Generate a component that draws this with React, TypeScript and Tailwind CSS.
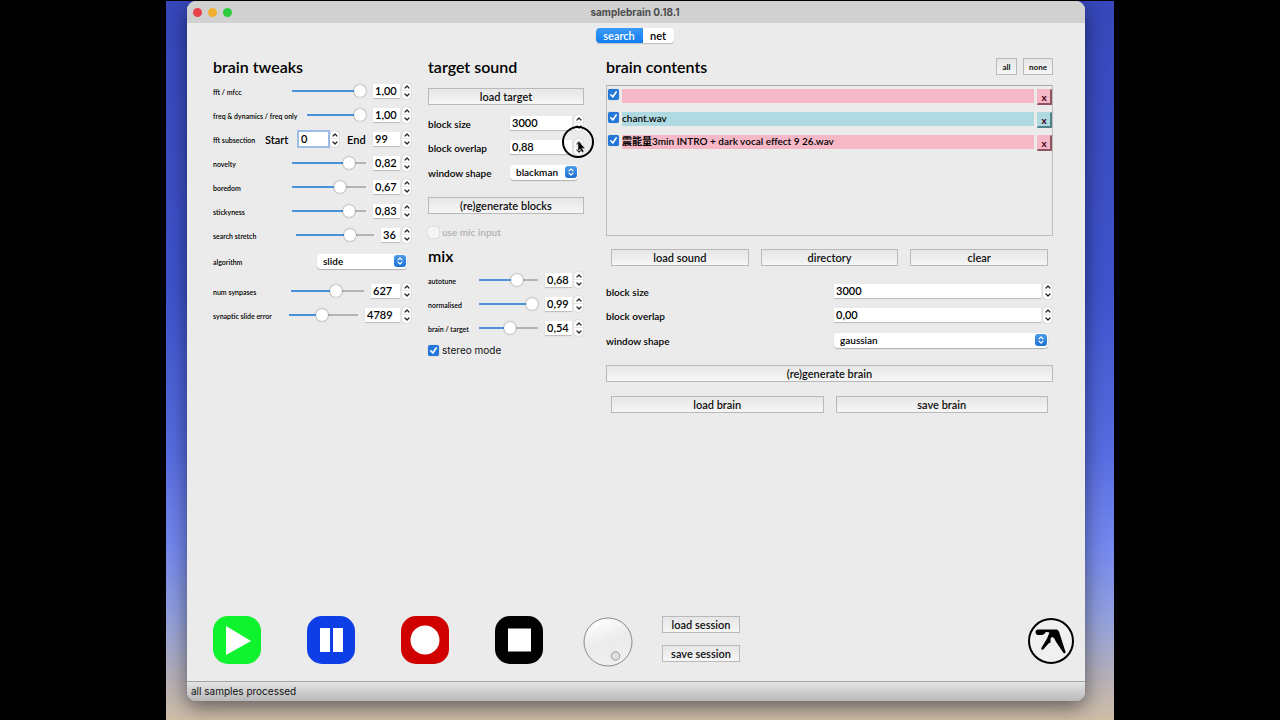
import { useState } from "react";
import type { ReactNode } from "react";

const LABEL = "pt-px text-[10px] leading-4 font-semibold text-black whitespace-nowrap";
const SMALL = "pt-px text-[7px] leading-3 font-semibold text-black whitespace-nowrap";

function Chevron({ up }: { up?: boolean }) {
  return (
    <svg viewBox="0 0 6 4" className="h-1 w-1.5" fill="none" stroke="#222" strokeWidth="1.2" strokeLinecap="round" strokeLinejoin="round">
      <path d={up ? "M1 3L3 1L5 3" : "M1 1L3 3L5 1"} />
    </svg>
  );
}

function Stepper({ name }: { name: string }) {
  return (
    <span className="flex h-4 w-[9px] shrink-0 flex-col overflow-hidden rounded-[4px] bg-white shadow-[0_0_1px_rgba(0,0,0,0.4)]">
      <button type="button" aria-label={`${name} up`} className="flex h-2 items-center justify-center border-b border-[#e4e4e4]">
        <Chevron up />
      </button>
      <button type="button" aria-label={`${name} down`} className="flex h-2 items-center justify-center">
        <Chevron />
      </button>
    </span>
  );
}

type SpinProps = { id: string; name: string; value: string; width: string; focused?: boolean };

function Spin({ id, name, value, width, focused }: SpinProps) {
  const [text, setText] = useState(value);
  const ring = focused ? "ring-2 ring-[#9dbde8]" : "shadow-[0_1px_1px_rgba(0,0,0,0.18)]";
  return (
    <span className={`flex items-center gap-0.5 ${width}`}>
      <input
        id={id}
        aria-label={name}
        value={text}
        onChange={(e) => setText(e.target.value)}
        className={`h-3.5 min-w-0 flex-1 bg-white px-0.5 text-[11px] leading-[14px] font-semibold text-black outline-none ${ring}`}
      />
      <Stepper name={name} />
    </span>
  );
}

type SliderRowProps = { name: string; value: string; amount: number; max?: number; slider: string; field: string };

function SliderRow({ name, value, amount, max = 1, slider, field }: SliderRowProps) {
  const [level, setLevel] = useState(amount);
  const id = name.replace(/\W+/g, "-");
  const share = (level / max) * 100;
  return (
    <div className="flex h-6 items-center gap-[7px]">
      <label htmlFor={id} className={`min-w-0 flex-1 ${SMALL}`}>
        {name}
      </label>
      <input
        type="range"
        id={id}
        min={0}
        max={max}
        step={max / 1000}
        value={level}
        onChange={(e) => setLevel(Number(e.target.value))}
        style={{ backgroundImage: `linear-gradient(to right, #4a92dc ${share}%, #b4b4b4 ${share}%)` }}
        className={`h-3 shrink-0 appearance-none bg-[length:100%_2px] bg-center bg-no-repeat [&::-webkit-slider-thumb]:size-3 [&::-webkit-slider-thumb]:appearance-none [&::-webkit-slider-thumb]:rounded-full [&::-webkit-slider-thumb]:bg-white [&::-webkit-slider-thumb]:shadow-[0_0_2px_rgba(0,0,0,0.5)] ${slider}`}
      />
      <Spin id={`${id}-value`} name={`${name} value`} value={value} width={field} />
    </div>
  );
}

function Picker({ id, value, options, width }: { id: string; value: string; options: string[]; width: string }) {
  return (
    <span className={`relative flex h-[15px] rounded-[4px] bg-white shadow-[0_1px_1px_rgba(0,0,0,0.25)] ${width}`}>
      <select id={id} defaultValue={value} className="w-full appearance-none bg-transparent px-1.5 text-[10px] leading-[15px] font-semibold outline-none">
        {options.map((o) => (
          <option key={o}>{o}</option>
        ))}
      </select>
      <span className="pointer-events-none absolute top-px right-px flex size-3 flex-col items-center justify-center rounded-[3px] bg-linear-to-b from-[#4c9cec] to-[#1a6fd0]">
        <svg viewBox="0 0 12 12" className="size-3" fill="none" stroke="#fff" strokeWidth="1.2" strokeLinecap="round" strokeLinejoin="round">
          <path d="M4 4.8L6 2.8L8 4.8M4 7.2L6 9.2L8 7.2" />
        </svg>
      </span>
    </span>
  );
}

function Push({ children, className = "", size = "text-[11px] font-semibold" }: { children: ReactNode; className?: string; size?: string }) {
  return (
    <button
      type="button"
      className={`flex h-[17px] items-center justify-center border border-[#b9b9b9] bg-linear-to-b from-[#e6e6e6] to-[#f6f6f6] leading-none text-[#111] ${size} ${className}`}
    >
      {children}
    </button>
  );
}

function Tick({ id, name, checked, disabled }: { id: string; name?: string; checked?: boolean; disabled?: boolean }) {
  const [on, setOn] = useState(!!checked);
  return (
    <span className="relative flex size-[11px] shrink-0">
      <input
        type="checkbox"
        id={id}
        aria-label={name}
        checked={on}
        disabled={disabled}
        onChange={() => setOn(!on)}
        className="size-[11px] appearance-none rounded-[2px] bg-[#f4f4f4] shadow-[0_0_1px_rgba(0,0,0,0.4)] checked:bg-[#2478d8]"
      />
      {on && (
        <svg viewBox="0 0 11 11" className="pointer-events-none absolute inset-0 size-[11px]" fill="none" stroke="#fff" strokeWidth="1.6" strokeLinecap="round" strokeLinejoin="round">
          <path d="M2.8 5.8L4.8 8L8.2 3" />
        </svg>
      )}
    </span>
  );
}

function Heading({ children }: { children: ReactNode }) {
  return <h2 className="h-[22px] text-[16px] leading-5 font-semibold whitespace-nowrap">{children}</h2>;
}

function Tweaks() {
  return (
    <section className="w-[198px] shrink-0">
      <Heading>brain tweaks</Heading>
      <SliderRow name="fft / mfcc" value="1,00" amount={1} slider="w-[74px]" field="w-[38px]" />
      <SliderRow name="freq & dynamics / freq only" value="1,00" amount={1} slider="w-[59px]" field="w-[38px]" />
      <div className="flex h-6 items-center">
        <span className={`flex-1 ${SMALL}`}>fft subsection</span>
        <label htmlFor="start" className="w-[34px] pt-px text-[11px] leading-4 font-semibold">Start</label>
        <Spin id="start" name="Start" value="0" width="w-10" focused />
        <label htmlFor="end" className="ml-2 w-[26px] pt-px text-[11px] leading-4 font-semibold">End</label>
        <Spin id="end" name="End" value="99" width="w-[38px]" />
      </div>
      <SliderRow name="novelty" value="0,82" amount={0.82} slider="w-[74px]" field="w-[38px]" />
      <SliderRow name="boredom" value="0,67" amount={0.67} slider="w-[74px]" field="w-[38px]" />
      <SliderRow name="stickyness" value="0,83" amount={0.83} slider="w-[74px]" field="w-[38px]" />
      <SliderRow name="search stretch" value="36" amount={36} max={50} slider="w-[78px]" field="w-[30px]" />
      <div className="mb-1 flex h-7 items-center justify-between">
        <label htmlFor="algorithm" className={SMALL}>algorithm</label>
        <span className="pr-1">
          <Picker id="algorithm" value="slide" options={["slide", "basic", "synaptic"]} width="w-[90px]" />
        </span>
      </div>
      <SliderRow name="num synpases" value="627" amount={640} max={1000} slider="w-[73px]" field="w-10" />
      <SliderRow name="synaptic slide error" value="4789" amount={4789} max={10000} slider="w-[69px]" field="w-[46px]" />
    </section>
  );
}

function Target() {
  return (
    <section className="w-[156px] shrink-0">
      <Heading>target sound</Heading>
      <Push className="mt-[9px] mb-1.5 w-full">load target</Push>
      <div className="flex h-6 items-center justify-between pr-px">
        <label htmlFor="t-size" className={LABEL}>block size</label>
        <Spin id="t-size" name="target block size" value="3000" width="w-[73px]" />
      </div>
      <div className="flex h-6 items-center justify-between pr-px">
        <label htmlFor="t-overlap" className={LABEL}>block overlap</label>
        <span className="relative flex">
          <Spin id="t-overlap" name="target block overlap" value="0,88" width="w-[73px]" />
          <svg viewBox="0 0 34 34" className="pointer-events-none absolute -top-3.5 -right-3 size-[34px]">
            <circle cx="17" cy="17" r="15" fill="none" stroke="#000" strokeWidth="2" />
            <path d="M17 16v10l2.3-2.1 1.7 3.6 1.8-.9-1.7-3.4h3z" fill="#000" stroke="#ddd" strokeWidth="0.5" />
          </svg>
        </span>
      </div>
      <div className="flex h-[26px] items-center justify-between">
        <label htmlFor="t-window" className={LABEL}>window shape</label>
        <span className="pr-1.5">
          <Picker id="t-window" value="blackman" options={["blackman", "gaussian", "hann"]} width="w-[68px]" />
        </span>
      </div>
      <Push className="mt-3 mb-2 w-full">(re)generate blocks</Push>
      <div className="flex h-5 items-center gap-[3px]">
        <Tick id="mic" disabled />
        <label htmlFor="mic" className="text-[10px] leading-4 font-semibold text-[#b0b0b0]">use mic input</label>
      </div>
      <div className="pt-1">
        <Heading>mix</Heading>
      </div>
      <div className="pr-px">
        <SliderRow name="autotune" value="0,68" amount={0.68} slider="w-[59px]" field="w-[38px]" />
        <SliderRow name="normalised" value="0,99" amount={0.99} slider="w-[59px]" field="w-[38px]" />
        <SliderRow name="brain / target" value="0,54" amount={0.54} slider="w-[59px]" field="w-[38px]" />
      </div>
      <div className="flex h-5 items-center gap-[3px]">
        <Tick id="stereo" checked />
        <label htmlFor="stereo" className="font-['Inter',sans-serif] text-[10px] leading-4 text-[#111]">stereo mode</label>
      </div>
    </section>
  );
}

const samples = [
  { file: "", bar: "bg-[#f6b8c7]", close: "border-r-[#8c5563] border-b-[#8c5563]" },
  { file: "chant.wav", bar: "bg-[#b0dae1]", close: "border-r-[#4d8389] border-b-[#4d8389]" },
  { file: "震能量3min INTRO + dark vocal effect 9 26.wav", bar: "bg-[#f6b8c7]", close: "border-r-[#8c5563] border-b-[#8c5563]" },
];

function Contents() {
  return (
    <section className="min-w-0 flex-1">
      <div className="flex items-start justify-between">
        <Heading>brain contents</Heading>
        <div className="flex gap-1.5 pt-px">
          <Push className="w-[21px]" size="text-[8px] font-bold">all</Push>
          <Push className="w-[30px]" size="text-[8px] font-bold">none</Push>
        </div>
      </div>
      <ul className="mt-1.5 h-[151px] border border-[#bdbdbd] border-t-[#a9a9a9] pt-[3px] pl-px">
        {samples.map((s, i) => (
          <li key={i} className="flex h-[23px] items-start">
            <Tick id={`sample-${i}`} name={s.file || "untitled sample"} checked />
            <label htmlFor={`sample-${i}`} className={`mr-[3px] ml-[3px] h-3.5 flex-1 text-[10px] leading-[13px] font-semibold whitespace-nowrap ${s.bar}`}>
              {s.file}
            </label>
            <button type="button" aria-label="remove sample" className={`flex h-4 w-[15px] items-center justify-center border border-r-2 border-b-2 border-transparent text-[10px] leading-none font-bold text-[#402] ${s.bar} ${s.close}`}>
              x
            </button>
          </li>
        ))}
      </ul>
      <div className="mt-[13px] grid grid-cols-3 gap-3 px-[5px]">
        <Push>load sound</Push>
        <Push>directory</Push>
        <Push>clear</Push>
      </div>
      <div className="mt-[13px] grid grid-cols-2 gap-x-[9px]">
        <label htmlFor="b-size" className={`flex h-6 items-center ${LABEL}`}>block size</label>
        <span className="flex items-center pr-px"><Spin id="b-size" name="brain block size" value="3000" width="w-full" /></span>
        <label htmlFor="b-overlap" className={`flex h-6 items-center ${LABEL}`}>block overlap</label>
        <span className="flex items-center pr-px"><Spin id="b-overlap" name="brain block overlap" value="0,00" width="w-full" /></span>
        <label htmlFor="b-window" className={`flex h-[26px] items-center ${LABEL}`}>window shape</label>
        <span className="flex items-center pr-[5px]"><Picker id="b-window" value="gaussian" options={["gaussian", "blackman", "hann"]} width="w-full" /></span>
      </div>
      <Push className="mt-3 w-full">(re)generate brain</Push>
      <div className="mt-3.5 grid grid-cols-2 gap-3 px-[5px]">
        <Push>load brain</Push>
        <Push>save brain</Push>
      </div>
    </section>
  );
}

function Transport() {
  const key = "size-12 shrink-0 overflow-hidden rounded-[15px]";
  return (
    <footer className="flex items-start pr-[11px] pb-3.5 pl-[26px]">
      <div className="flex gap-[46px]">
        <button type="button" aria-label="play" className={`${key} bg-[#0ff22e]`}>
          <svg viewBox="0 0 48 48" fill="#fff"><path d="M13 10L38 25L13 39Z" /></svg>
        </button>
        <button type="button" aria-label="pause" className={`${key} bg-[#0e3ee6]`}>
          <svg viewBox="0 0 48 48" fill="#fff"><path d="M13 12h10v24H13zM26 12h10v24H26z" /></svg>
        </button>
        <button type="button" aria-label="record" className={`${key} bg-[#d00000]`}>
          <svg viewBox="0 0 48 48" fill="#fff"><circle cx="24" cy="24" r="14.5" /></svg>
        </button>
        <button type="button" aria-label="stop" className={`${key} bg-black`}>
          <svg viewBox="0 0 48 48" fill="#fff"><path d="M13 12.5h23v23H13z" /></svg>
        </button>
      </div>
      <svg viewBox="0 0 50 50" className="mt-px ml-10 size-[50px] shrink-0" role="img" aria-label="volume">
        <defs>
          <linearGradient id="dial" x1="0.3" y1="0" x2="0.7" y2="1">
            <stop offset="0" stopColor="#ffffff" />
            <stop offset="0.5" stopColor="#ebebeb" />
            <stop offset="1" stopColor="#f0f0f0" />
          </linearGradient>
        </defs>
        <circle cx="25" cy="25" r="24" fill="url(#dial)" stroke="#8a8a8a" strokeWidth="1" />
        <circle cx="32.5" cy="39" r="4.2" fill="#e0e0e0" stroke="#989898" strokeWidth="1" />
      </svg>
      <div className="ml-[29px] flex w-[78px] shrink-0 flex-col gap-3">
        <Push>load session</Push>
        <Push>save session</Push>
      </div>
      <svg viewBox="0 0 46 46" className="mt-0.5 ml-auto size-[46px] shrink-0" role="img" aria-label="logo">
        <circle cx="23" cy="23" r="22" fill="#f0f0f0" stroke="#000" strokeWidth="2" />
        <path d="M10 11.5H29L31 13.5L37.7 34.5Q37 36 35.3 34.8L27.5 23Q26.500 19.500 24 19L22.5 20.5V24.5L20.5 25.5L15 31.8Q13 32 13.2 30.2L19 20.5L21.5 14.5Q19 13.5 17.5 14.2Q16.5 17 14 17H10Q7.5 16.8 7.5 14.2T10 11.5Z" />
      </svg>
    </footer>
  );
}

export default function App() {
  return (
    <div className="flex min-h-screen bg-black px-[166px] pt-px font-['Comic_Sans_MS','Lato','Noto_Sans_CJK_SC',sans-serif]">
      <div className="flex flex-1 bg-[linear-gradient(to_bottom,#3648bb_0%,#3f53cc_40%,#566be0_62%,#7488ee_76%,#93a0dc_86%,#b5b0b8_94%,#d0bda6_100%)] pr-[29px] pb-[19px] pl-[21px]">
        <main className="flex flex-1 flex-col overflow-hidden rounded-[9px] bg-[#ebebeb] shadow-[0_6px_20px_rgba(0,0,0,0.5)]">
          <header className="grid h-[22px] grid-cols-[1fr_auto_1fr] items-center bg-[#d1d1d1] pr-2 pl-[6px]">
            <div className="flex gap-1.5">
              <button type="button" aria-label="close" className="size-[9px] rounded-full bg-[#e8424d]" />
              <button type="button" aria-label="minimise" className="size-[9px] rounded-full bg-[#f3b02f]" />
              <button type="button" aria-label="zoom" className="size-[9px] rounded-full bg-[#2ccb3f]" />
            </div>
            <h1 className="font-['Inter',sans-serif] text-[10px] leading-4 font-bold text-[#4c4c4c]">samplebrain 0.18.1</h1>
          </header>
          <div className="flex justify-center pt-[5px] pr-[3px]">
            <nav className="flex h-[15px] overflow-hidden rounded-[4px] bg-white text-[11px] leading-[15px] font-semibold shadow-[0_1px_1px_rgba(0,0,0,0.2)]">
              <button type="button" className="w-[47px] bg-linear-to-b from-[#3a9af8] to-[#0f7cf0] text-white">search</button>
              <button type="button" className="w-[31px]">net</button>
            </nav>
          </div>
          <div className="mt-3.5 flex flex-1 pr-8 pl-[26px]">
            <Tweaks />
            <div className="ml-[17px] flex min-w-0 flex-1 gap-[22px]">
              <Target />
              <Contents />
            </div>
          </div>
          <Transport />
          <div className="h-5 border-t border-[#a2a2a2] bg-linear-to-b from-[#e4e4e4] to-[#b9b9bb] px-1 font-['Inter',sans-serif] text-[10px] leading-[19px] text-[#111]">
            all samples processed
          </div>
        </main>
      </div>
    </div>
  );
}
